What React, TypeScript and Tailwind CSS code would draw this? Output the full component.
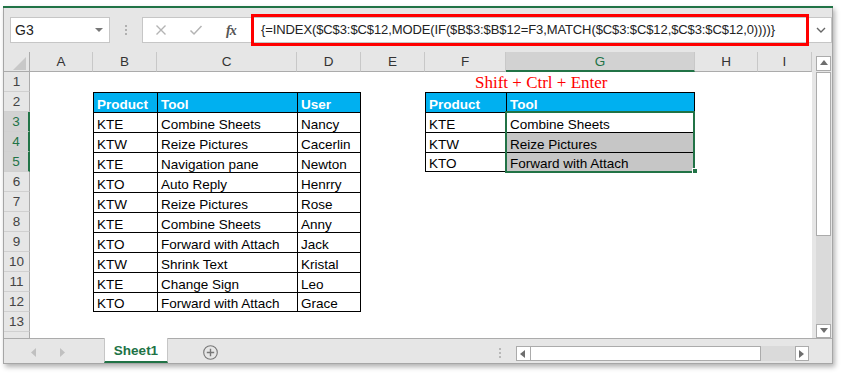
const FONT = { fontFamily: '"Liberation Sans", Arial, sans-serif' };

const COLS = ['A', 'B', 'C', 'D', 'E', 'F', 'G', 'H', 'I'];

const leftTable: Record<number, string[]> = {
    2: ['Product', 'Tool', 'User'],
    3: ['KTE', 'Combine Sheets', 'Nancy'],
    4: ['KTW', 'Reize Pictures', 'Cacerlin'],
    5: ['KTE', 'Navigation pane', 'Newton'],
    6: ['KTO', 'Auto Reply', 'Henrry'],
    7: ['KTW', 'Reize Pictures', 'Rose'],
    8: ['KTE', 'Combine Sheets', 'Anny'],
    9: ['KTO', 'Forward with Attach', 'Jack'],
    10: ['KTW', 'Shrink Text', 'Kristal'],
    11: ['KTE', 'Change Sign', 'Leo'],
    12: ['KTO', 'Forward with Attach', 'Grace'],
};

const rightTable: Record<number, string[]> = {
    2: ['Product', 'Tool'],
    3: ['KTE', 'Combine Sheets'],
    4: ['KTW', 'Reize Pictures'],
    5: ['KTO', 'Forward with Attach'],
};

const FORMULA = '{=INDEX($C$3:$C$12,MODE(IF($B$3:$B$12=F3,MATCH($C$3:$C$12,$C$3:$C$12,0))))}';

function Cell({ r, c }: { r: number; c: number }) {
    // F1 holds the floating hint text
    if (r === 1 && c === 6) {
        return (
            <div className="relative z-10 flex items-center pl-[50px] pt-[1px] whitespace-nowrap overflow-visible">
                <span
                    className="text-[17px] leading-[18px] text-[#ff0000]"
                    style={{ fontFamily: '"Liberation Serif", "Times New Roman", serif' }}
                >
                    Shift + Ctrl + Enter
                </span>
            </div>
        );
    }

    let text = '';
    let cls = 'bg-white';

    if (r >= 2 && r <= 12 && c >= 2 && c <= 4) {
        text = leftTable[r][c - 2];
        cls = 'border-l border-t border-black';
        if (c === 4) cls += ' border-r';
        if (r === 12) cls += ' border-b';
        cls += r === 2 ? ' bg-[#00b0f0] text-white font-bold' : ' bg-white text-black';
    } else if (r >= 2 && r <= 5 && (c === 6 || c === 7)) {
        text = rightTable[r][c - 6];
        cls = 'border-l border-t border-black';
        if (c === 7) cls += ' border-r';
        if (r === 5) cls += ' border-b';
        if (r === 2) cls += ' bg-[#00b0f0] text-white font-bold';
        else if (c === 7 && r > 3) cls += ' bg-[#c6c6c6] text-black';
        else cls += ' bg-white text-black';
    }

    return (
        <div className={`flex items-center pl-[3px] pt-[3px] overflow-hidden whitespace-nowrap text-[13.5px] leading-[17px] ${cls}`}>
            {text}
        </div>
    );
}

function RowHeader({ r }: { r: number }) {
    const selected = r >= 3 && r <= 5;
    return (
        <div
            className={`flex items-center justify-center pt-[1px] border-b border-[#d0d0d0] text-[13.5px] ${
                selected
                    ? 'bg-[#d2d2d2] text-[#217346] border-r-2 border-r-[#217346]'
                    : 'bg-[#e6e6e6] text-[#444] border-r border-r-[#ababab]'
            }`}
        >
            {r}
        </div>
    );
}

function ScrollArrow({ dir }: { dir: 'up' | 'down' | 'left' | 'right' }) {
    const pts = {
        up: '1,6 9,6 5,1',
        down: '1,2 9,2 5,7',
        left: '6,1 6,9 1,5',
        right: '2,1 2,9 7,5',
    }[dir];
    return (
        <svg width="10" height="10" viewBox="0 0 10 10">
            <polygon points={pts} fill="#6e6e6e" />
        </svg>
    );
}

export default function App() {
    return (
        <div className="w-[843px] h-[374px] bg-white overflow-hidden" style={FONT}>
            <div className="ml-[3px] mt-[6px] w-[830px] h-[358px] flex flex-col border-x border-b border-[#a6a6a6] bg-[#e6e6e6] shadow-[2px_3px_5px_rgba(0,0,0,0.3)]">
                {/* Green title strip */}
                <div className="h-[2px] bg-[#217346] -mx-px" />

                {/* Formula bar */}
                <div className="relative h-[45px] flex items-center pl-[6px]">
                    <div className="w-[100px] h-[26px] bg-white border border-[#c6c6c6] flex items-center justify-between pl-[4px] pr-[6px]">
                        <span className="text-[14px] text-[#222]">G3</span>
                        <svg width="8" height="5" viewBox="0 0 8 5">
                            <polygon points="0,0 8,0 4,4" fill="#777" />
                        </svg>
                    </div>
                    <div className="w-[32px] flex flex-col items-center gap-[2px]">
                        <span className="w-[2px] h-[2px] bg-[#b0b0b0]" />
                        <span className="w-[2px] h-[2px] bg-[#b0b0b0]" />
                        <span className="w-[2px] h-[2px] bg-[#b0b0b0]" />
                    </div>
                    <div className="w-[109px] h-[26px] bg-white border border-[#c6c6c6] border-r-0 flex items-center">
                        <svg width="12" height="12" viewBox="0 0 12 12" className="ml-[12px]">
                            <path d="M1.5 1.5 L10.5 10.5 M10.5 1.5 L1.5 10.5" stroke="#b4b4b4" strokeWidth="1.4" />
                        </svg>
                        <svg width="14" height="12" viewBox="0 0 14 12" className="ml-[22px]">
                            <path d="M1.5 6.5 L5 10 L12.5 2" stroke="#b4b4b4" strokeWidth="1.5" fill="none" />
                        </svg>
                        <span
                            className="ml-[23px] text-[14px] italic font-bold text-[#555] tracking-[-1px]"
                            style={{ fontFamily: '"Liberation Serif", serif' }}
                        >
                            fx
                        </span>
                    </div>
                    <div className="flex-1 h-[26px] bg-white border border-[#c6c6c6] flex items-center justify-between pl-[9px] pr-[5px]">
                        <span className="text-[13px] tracking-[-0.1px] text-[#222] whitespace-nowrap">{FORMULA}</span>
                        <svg width="10" height="6" viewBox="0 0 10 6">
                            <path d="M1 1 L5 5 L9 1" stroke="#666" strokeWidth="1.4" fill="none" />
                        </svg>
                    </div>
                    {/* red annotation box */}
                    <div className="absolute left-[247px] top-[6px] w-[558px] h-[32px] border-[3px] border-[#ff0000]" />
                </div>

                {/* Sheet area */}
                <div className="flex">
                    <div className="relative w-[808px] bg-white">
                        <div className="grid grid-cols-[26px_63px_64px_140px_64px_64px_81px_189px_63px_54px] auto-rows-[20px]">
                            {/* corner */}
                            <div className="bg-[#e6e6e6] border-r border-b border-[#ababab] flex items-end justify-end pr-[3px] pb-[1px]">
                                <svg width="13" height="13" viewBox="0 0 13 13">
                                    <polygon points="13,0 13,13 0,13" fill="#c8c8c8" />
                                </svg>
                            </div>
                            {COLS.map((col) => (
                                <div
                                    key={col}
                                    className={`flex items-center justify-center pt-[1px] text-[13.5px] border-r border-r-[#c8c8c8] ${
                                        col === 'G'
                                            ? 'bg-[#d2d2d2] text-[#217346] border-b-2 border-b-[#217346]'
                                            : 'bg-[#e6e6e6] text-[#333] border-b border-b-[#ababab]'
                                    }`}
                                >
                                    {col}
                                </div>
                            ))}

                            {Array.from({ length: 13 }, (_, i) => i + 1).map((r) => [
                                <RowHeader key={`h${r}`} r={r} />,
                                ...COLS.map((_, ci) => <Cell key={`${r}-${ci}`} r={r} c={ci + 1} />),
                            ])}
                        </div>
                        {/* partial row 14 */}
                        <div className="flex h-[6px]">
                            <div className="w-[26px] bg-[#e6e6e6] border-r border-[#ababab]" />
                            <div className="flex-1 bg-white" />
                        </div>

                        {/* selection G3:G5 */}
                        <div className="absolute left-[501px] top-[59px] w-[190px] h-[62px] border-2 border-[#217346] pointer-events-none" />
                        <div className="absolute left-[688px] top-[116px] w-[6px] h-[6px] bg-[#217346] border border-white" />
                    </div>

                    {/* vertical scrollbar */}
                    <div className="w-[20px] flex flex-col pl-[4px] pr-[1px] pt-[4px] bg-[#e6e6e6]">
                        <div className="h-[15px] bg-white border border-[#ababab] flex items-center justify-center">
                            <ScrollArrow dir="up" />
                        </div>
                        <div className="h-[164px] mt-[1px] bg-white border border-[#ababab]" />
                        <div className="flex-1 bg-[#dadada]" />
                        <div className="h-[14px] bg-white border border-[#ababab] flex items-center justify-center">
                            <ScrollArrow dir="down" />
                        </div>
                    </div>
                </div>

                {/* Sheet tabs */}
                <div className="h-[25px] flex border-t border-[#ababab]">
                    <div className="w-[100px] flex items-center pt-[3px]">
                        <svg width="6" height="9" viewBox="0 0 6 9" className="ml-[27px]">
                            <polygon points="5,0 5,9 0,4.5" fill="#c0c0c0" />
                        </svg>
                        <svg width="6" height="9" viewBox="0 0 6 9" className="ml-[22px]">
                            <polygon points="1,0 1,9 6,4.5" fill="#c0c0c0" />
                        </svg>
                    </div>
                    <div className="w-[64px] bg-white border-x border-[#c6c6c6] border-b-2 border-b-[#217346] flex items-center justify-center pt-[2px] -mt-px">
                        <span className="text-[13.5px] font-bold text-[#217346]">Sheet1</span>
                    </div>
                    <div className="w-[50px] flex items-center pl-[35px] pt-[3px]">
                        <svg width="15" height="15" viewBox="0 0 15 15">
                            <circle cx="7.5" cy="7.5" r="6.8" stroke="#777" strokeWidth="1.1" fill="none" />
                            <path d="M7.5 3.8 V11.2 M3.8 7.5 H11.2" stroke="#777" strokeWidth="1.4" />
                        </svg>
                    </div>
                    <div className="w-[284px] flex items-center justify-end pr-[1px] pt-[3px]">
                        <div className="flex flex-col gap-[2px]">
                            <span className="w-[2px] h-[2px] bg-[#b8b8b8]" />
                            <span className="w-[2px] h-[2px] bg-[#b8b8b8]" />
                            <span className="w-[2px] h-[2px] bg-[#b8b8b8]" />
                        </div>
                    </div>
                    <div className="w-[14px]" />
                    <div className="flex items-start pt-[7px]">
                        <div className="w-[15px] h-[15px] bg-white border border-[#ababab] flex items-center justify-center">
                            <ScrollArrow dir="left" />
                        </div>
                        <div className="w-[230px] h-[15px] bg-white border-y border-r border-[#ababab]" />
                        <div className="w-[34px] h-[15px] bg-[#dadada]" />
                        <div className="w-[14px] h-[15px] bg-white border border-[#ababab] flex items-center justify-center">
                            <ScrollArrow dir="right" />
                        </div>
                    </div>
                </div>
            </div>
        </div>
    );
}
